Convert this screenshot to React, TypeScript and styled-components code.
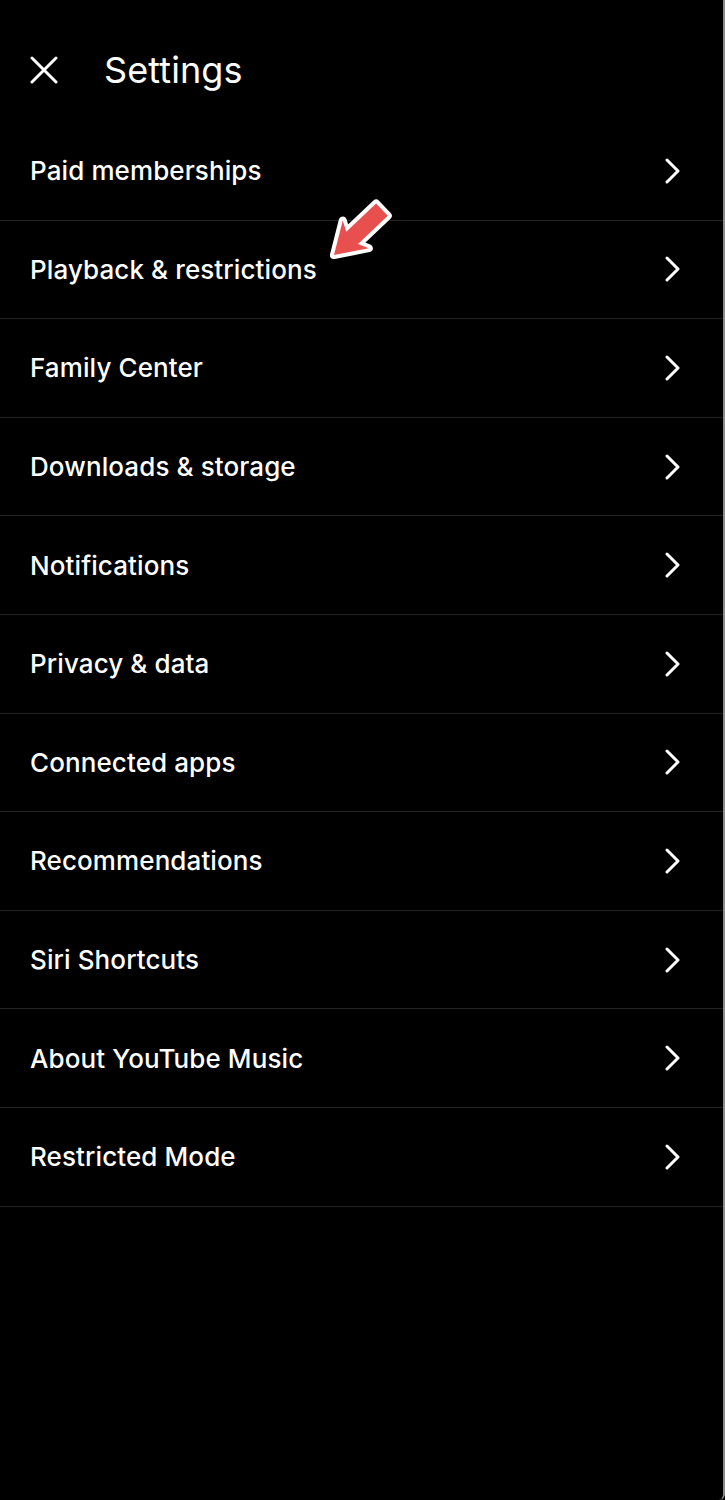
import React from "react";
import styled, { createGlobalStyle } from "styled-components";

const GlobalStyle = createGlobalStyle`
  html, body {
    margin: 0;
    padding: 0;
    background: #000;
  }
  body {
    font-family: Inter, "Noto Sans", "Liberation Sans", sans-serif;
    -webkit-font-smoothing: antialiased;
  }
`;

const Screen = styled.div`
  position: relative;
  width: 725px;
  height: 1500px;
  background: #000;
  color: #fff;
  box-sizing: border-box;
  border-right: 2px solid #8a8a8a;
  border-bottom-right-radius: 6px;
  overflow: hidden;
`;

const Header = styled.header`
  display: flex;
  align-items: center;
  height: 140px;
  padding: 0 0 0 30px;
  box-sizing: border-box;
  gap: 46px;
`;

const CloseButton = styled.button`
  background: none;
  border: 0;
  padding: 0;
  width: 28px;
  height: 28px;
  display: flex;
  color: #fff;
`;

const Title = styled.h1`
  margin: 0;
  font-size: 36px;
  font-weight: 400;
  letter-spacing: 0.1px;
`;

const List = styled.ul`
  list-style: none;
  margin: -18px 0 0;
  padding: 0;
`;

const Row = styled.li`
  display: flex;
  align-items: center;
  justify-content: space-between;
  height: 98.6px;
  padding: 0 41px 0 30px;
  border-bottom: 1.5px solid #242424;
  box-sizing: border-box;
  position: relative;
`;

const Label = styled.span`
  font-size: 26px;
  font-weight: 500;
  letter-spacing: 0.1px;
`;

const Pointer = styled.svg`
  position: absolute;
  left: 320px;
  top: -32px;
`;

const items = [
  "Paid memberships",
  "Playback & restrictions",
  "Family Center",
  "Downloads & storage",
  "Notifications",
  "Privacy & data",
  "Connected apps",
  "Recommendations",
  "Siri Shortcuts",
  "About YouTube Music",
  "Restricted Mode",
];

const Chevron = () => (
  <svg width="18" height="26" viewBox="0 0 18 26" fill="none">
    <path
      d="M3 2 L14 13 L3 24"
      stroke="#fff"
      strokeWidth="3"
      strokeLinecap="round"
      strokeLinejoin="round"
    />
  </svg>
);

// red annotation arrow, drawn pointing right then turned toward the label
const Arrow = () => (
  <Pointer width="80" height="80" viewBox="0 0 80 80">
    <polygon
      points="0,0 -30,-19 -25,-8.5 -66,-8.5 -66,8.5 -25,8.5 -30,19"
      transform="translate(14 66) rotate(136.6)"
      fill="#e84f4f"
      stroke="#fff"
      strokeWidth="8"
      strokeLinejoin="round"
      paintOrder="stroke"
    />
  </Pointer>
);

const App: React.FC = () => {
  return (
    <>
      <GlobalStyle />
      <Screen>
        <Header>
          <CloseButton aria-label="Close">
            <svg width="28" height="28" viewBox="0 0 28 28">
              <path
                d="M2 2 L26 26 M26 2 L2 26"
                stroke="#fff"
                strokeWidth="3"
                strokeLinecap="round"
              />
            </svg>
          </CloseButton>
          <Title>Settings</Title>
        </Header>
        <List>
          {items.map((item, i) => (
            <Row key={item}>
              <Label>{item}</Label>
              <Chevron />
              {i === 1 && <Arrow />}
            </Row>
          ))}
        </List>
      </Screen>
    </>
  );
};

export default App;
